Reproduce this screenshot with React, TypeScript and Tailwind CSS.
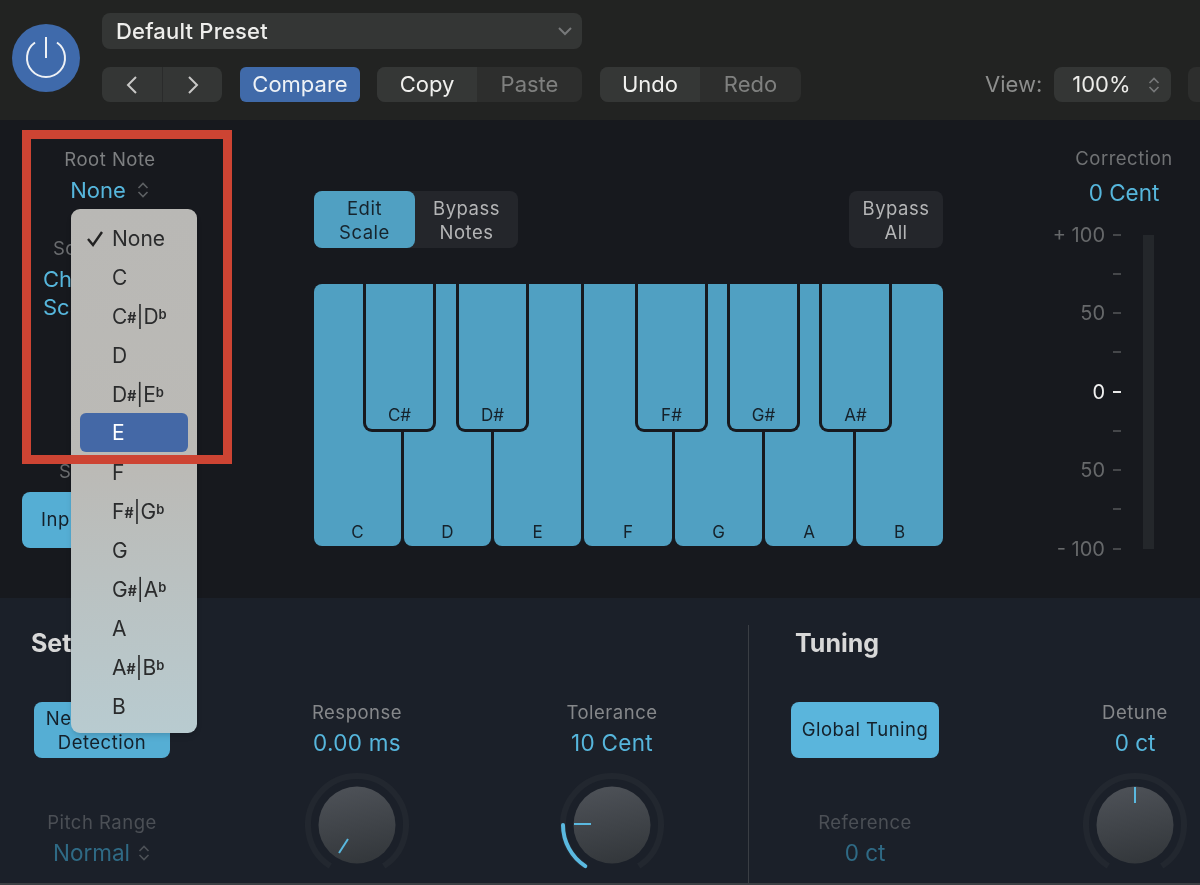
import React from 'react'

const font = { fontFamily: 'Inter, "Liberation Sans", sans-serif' }

function UpDown({ className = 'text-[#6d6f71]' }: { className?: string }) {
  return (
    <svg width="14" height="20" viewBox="0 0 14 20" fill="none" stroke="currentColor" strokeWidth="1.6" className={`shrink-0 ${className}`}>
      <path d="M2.5 8 L7 3.5 L11.5 8" />
      <path d="M2.5 12 L7 16.5 L11.5 12" />
    </svg>
  )
}

function Seg({ children, active, w }: { children: React.ReactNode; active?: boolean; w: string }) {
  return (
    <div className={`${w} h-full flex items-center justify-center ${active ? 'bg-[#353736] text-[#f0f0ee]' : 'text-[#7f807f]'}`}>
      {children}
    </div>
  )
}

function polar(r: number, deg: number) {
  const a = ((deg - 90) * Math.PI) / 180
  return [60 + r * Math.cos(a), 60 + r * Math.sin(a)]
}

function arc(r: number, from: number, to: number) {
  const [x1, y1] = polar(r, from)
  const [x2, y2] = polar(r, to)
  return `M${x1} ${y1} A${r} ${r} 0 ${to - from > 180 ? 1 : 0} 1 ${x2} ${y2}`
}

function Knob({ id, mark, value }: { id: string; mark: [number, number, number, number]; value?: [number, number] }) {
  return (
    <svg width="120" height="120" viewBox="0 0 120 120" fill="none">
      <defs>
        <linearGradient id={id} x1="0.4" y1="0" x2="0.6" y2="1">
          <stop offset="0" stopColor="#4d5157" />
          <stop offset="1" stopColor="#33373b" />
        </linearGradient>
      </defs>
      <path d={arc(49, -147, 147)} stroke="#22272f" strokeWidth="6" />
      {value && <path d={arc(49, value[0], value[1])} stroke="#5ab9e0" strokeWidth="4" strokeLinecap="round" />}
      <circle cx="60" cy="60" r="38.5" fill={`url(#${id})`} />
      <line x1={mark[0]} y1={mark[1]} x2={mark[2]} y2={mark[3]} stroke="#5ab9e0" strokeWidth="2" />
    </svg>
  )
}

function Sharp() {
  return <span className="text-[14px] font-bold relative -top-[1px]">#</span>
}

function Flat() {
  return <span className="text-[13px] font-semibold relative -top-[5px]">b</span>
}

const notes: React.ReactNode[] = [
  'None',
  'C',
  <>C<Sharp />|D<Flat /></>,
  'D',
  <>D<Sharp />|E<Flat /></>,
  'E',
  'F',
  <>F<Sharp />|G<Flat /></>,
  'G',
  <>G<Sharp />|A<Flat /></>,
  'A',
  <>A<Sharp />|B<Flat /></>,
  'B',
]

const whiteKeys = [
  { n: 'C', w: 'w-[87px]', r: 'rounded-tl-lg' },
  { n: 'D', w: 'w-[87px]', r: '' },
  { n: 'E', w: 'w-[87px]', r: '' },
  { n: 'F', w: 'w-[88px]', r: '' },
  { n: 'G', w: 'w-[87px]', r: '' },
  { n: 'A', w: 'w-[88px]', r: '' },
  { n: 'B', w: 'w-[87px]', r: 'rounded-tr-lg' },
]

const blackKeys = [
  { n: 'C#', left: 'left-[49px]' },
  { n: 'D#', left: 'left-[142px]' },
  { n: 'F#', left: 'left-[321px]' },
  { n: 'G#', left: 'left-[413px]' },
  { n: 'A#', left: 'left-[505px]' },
]

const scale = [
  { t: '+ 100' },
  { t: '' },
  { t: '50' },
  { t: '' },
  { t: '0', on: true },
  { t: '' },
  { t: '50' },
  { t: '' },
  { t: '- 100' },
]

export default function App() {
  return (
    <div className="relative w-[1200px] h-[885px] overflow-hidden bg-[#17191e] blur-[0.4px]" style={font}>
      {/* Header */}
      <div className="h-[120px] bg-[#222322] flex text-[22px]">
        <div className="w-[68px] h-[68px] ml-3 mt-6 rounded-full bg-[#3f6aab] shrink-0">
          <svg width="68" height="68" viewBox="0 0 68 68" fill="none" stroke="#eef1f5" strokeWidth="2">
            <path d="M23 18.5 A19 19 0 1 0 45 18.5" />
            <line x1="34" y1="13" x2="34" y2="34" />
          </svg>
        </div>
        <div className="ml-[22px] pt-[13px] w-[1098px] shrink-0">
          <div className="w-[480px] h-9 rounded-lg bg-[#343635] flex items-center justify-between pl-[14px] pr-[9px] text-[#eeeeec] font-medium">
            <span className="tracking-[0.2px]">Default Preset</span>
            <svg width="16" height="10" viewBox="0 0 16 10" fill="none" stroke="#77797a" strokeWidth="2">
              <path d="M2 2 L8 8 L14 2" />
            </svg>
          </div>
          <div className="mt-[18px] h-[35px] flex items-center">
            <div className="w-[120px] h-full rounded-lg bg-[#343635] flex overflow-hidden shrink-0">
              <div className="w-[61px] flex items-center justify-center border-r border-[#2a2b2b]">
                <svg width="14" height="22" viewBox="0 0 14 22" fill="none" stroke="#c9c9c7" strokeWidth="2">
                  <path d="M11 3 L3 11 L11 19" />
                </svg>
              </div>
              <div className="w-[59px] flex items-center justify-center">
                <svg width="14" height="22" viewBox="0 0 14 22" fill="none" stroke="#c9c9c7" strokeWidth="2">
                  <path d="M3 3 L11 11 L3 19" />
                </svg>
              </div>
            </div>
            <div className="ml-[18px] w-[120px] h-full rounded-md bg-[#406aa9] text-[#eef2f6] flex items-center justify-center shrink-0">
              Compare
            </div>
            <div className="ml-[17px] h-full rounded-lg bg-[#2d2e2d] flex overflow-hidden shrink-0">
              <Seg active w="w-[100px]">Copy</Seg>
              <Seg w="w-[105px]">Paste</Seg>
            </div>
            <div className="ml-[18px] h-full rounded-lg bg-[#2d2e2d] flex overflow-hidden shrink-0">
              <Seg active w="w-[100px]">Undo</Seg>
              <Seg w="w-[101px]">Redo</Seg>
            </div>
            <span className="ml-[184px] text-[#8d8e8d] shrink-0">View:</span>
            <div className="ml-[12px] w-[117px] h-full rounded-lg bg-[#343635] flex items-center pl-[18px] text-[#ecece9] shrink-0">
              100%
              <UpDown className="ml-[16px] text-[#77797a]" />
            </div>
            <div className="ml-[17px] w-[30px] h-full rounded-lg bg-[#2d2e2d] shrink-0" />
          </div>
        </div>
      </div>

      {/* Main */}
      <div className="h-[478px] flex">
        <div className="w-[314px] shrink-0 text-[22px] text-[#56b6dc]">
          <div className="w-[220px] mt-[29px] text-center text-[18.5px] tracking-[0.5px] leading-5 text-[#7d7f81]">Root Note</div>
          <div className="w-[220px] mt-[9px] flex items-center justify-center gap-[10px] leading-6">
            <span>None</span>
            <UpDown className="text-[#5d6063]" />
          </div>
          <div className="pl-[53px] mt-[36px] text-[18.5px] tracking-[0.5px] leading-5 text-[#6a6c6f]">Scale</div>
          <div className="pl-[43px] mt-[7px] leading-[28px]">
            Chromatic
            <br />
            Scale
          </div>
          <div className="pl-[59px] mt-[140px] text-[18.5px] tracking-[0.5px] leading-5 text-[#6a6c6f]">Show</div>
          <div className="ml-[22px] mt-[11px] w-[148px] h-14 rounded-lg bg-[#55aed4] text-[#14202a] text-[18.5px] tracking-[0.5px] flex items-center pl-[19px]">
            Input
          </div>
        </div>

        <div className="w-[629px] shrink-0 pt-[71px]">
          <div className="h-[57px] flex justify-between text-[18.5px] tracking-[0.5px] leading-[24px] text-center">
            <div className="flex rounded-lg bg-[#24262b] text-[#b4b5b6]">
              <div className="w-[101px] rounded-lg bg-[#50a0c2] text-[#16242d] flex items-center justify-center">
                Edit
                <br />
                Scale
              </div>
              <div className="w-[103px] flex items-center justify-center">
                Bypass
                <br />
                Notes
              </div>
            </div>
            <div className="w-[94px] rounded-lg bg-[#24262b] text-[#b4b5b6] flex items-center justify-center">
              Bypass
              <br />
              All
            </div>
          </div>
          <div className="relative mt-9 h-[262px] flex gap-[3px] text-[17px] text-[#16222b]">
            {whiteKeys.map((k) => (
              <div key={k.n} className={`${k.w} ${k.r} rounded-b-lg bg-[#50a0c2] flex items-end justify-center pb-[1px]`}>
                {k.n}
              </div>
            ))}
            {blackKeys.map((k) => (
              <div
                key={k.n}
                className={`absolute top-0 ${k.left} w-[73px] h-[148px] bg-[#50a0c2] border-x-[3.5px] border-b-[3.5px] border-[#17191e] rounded-b-[9px] flex items-end justify-center pb-[1px]`}
              >
                {k.n}
              </div>
            ))}
          </div>
        </div>

        <div className="flex-1 min-w-0">
          <div className="ml-[132px] w-[98px] mt-[28px] flex justify-center text-[18.5px] tracking-[0.5px] leading-5 text-[#707274] whitespace-nowrap">Correction</div>
          <div className="ml-[132px] w-[98px] mt-[13px] flex justify-center text-[22.5px] leading-6 text-[#56b6dc] whitespace-nowrap">0 Cent</div>
          <div className="ml-[102px] mt-[10px] flex">
            <div className="w-[76px] text-[20px]">
              {scale.map((s, i) => (
                <div key={i} className="h-[39.25px] flex items-center justify-end whitespace-nowrap">
                  <span className={s.on ? 'text-[#f0f0f0]' : 'text-[#66686a]'}>{s.t}</span>
                  <span className={`ml-[8px] w-2 h-[2px] ${s.on ? 'bg-[#e8e8e8]' : 'bg-[#45474a]'}`} />
                </div>
              ))}
            </div>
            <div className="ml-[22px] mt-[20px] w-[11px] h-[314px] bg-[#24272b]" />
          </div>
        </div>
      </div>

      {/* Bottom */}
      <div className="h-[287px] bg-[#1b2029] border-b-2 border-[#3c4044] flex">
        <div className="w-[714px] shrink-0 flex text-center">
          <div className="w-[204px] shrink-0">
            <div className="pl-[31px] mt-[31px] text-left text-[25px] leading-7 font-bold text-[#d8d8d8]">Settings</div>
            <div className="ml-[34px] mt-[45px] w-[136px] h-14 rounded-lg bg-[#55aed4] text-[#14202a] text-[18.5px] tracking-[0.5px] leading-[24px] flex items-center justify-center">
              Neural Pitch Detection
            </div>
            <div className="mt-[54px] text-[18.5px] tracking-[0.5px] leading-5 text-[#4b4f55] whitespace-nowrap">Pitch Range</div>
            <div className="mt-[9px] flex items-center justify-center gap-[7px] text-[22.5px] leading-6 text-[#2f6a85]">
              Normal
              <UpDown className="text-[#4d5157]" />
            </div>
          </div>
          <div className="w-[306px] shrink-0 pt-[104px] flex flex-col items-center">
            <div className="text-[18.5px] tracking-[0.5px] leading-5 text-[#85878a]">Response</div>
            <div className="mt-[9px] text-[22.5px] tracking-[0.3px] leading-6 text-[#56b6dc]">0.00 ms</div>
            <div className="mt-[10px]">
              <Knob id="k1" mark={[42, 88, 51, 74]} />
            </div>
          </div>
          <div className="w-[204px] shrink-0 pt-[104px] flex flex-col items-center">
            <div className="text-[18.5px] tracking-[0.5px] leading-5 text-[#85878a]">Tolerance</div>
            <div className="mt-[9px] text-[22.5px] tracking-[0.3px] leading-6 text-[#56b6dc]">10 Cent</div>
            <div className="mt-[10px]">
              <Knob id="k2" mark={[22, 59, 39, 59]} value={[-147, -90]} />
            </div>
          </div>
        </div>
        <div className="ml-[34px] mt-[27px] w-px bg-[#3a3e44] shrink-0" />
        <div className="flex text-center">
          <div className="w-[232px] shrink-0">
            <div className="ml-[46px] mt-[31px] text-left text-[25px] leading-7 font-bold text-[#d8d8d8]">Tuning</div>
            <div className="ml-[42px] mt-[45px] w-[148px] h-14 rounded-lg bg-[#5ab5dc] text-[#14202a] text-[18.5px] tracking-[0.5px] flex items-center justify-center whitespace-nowrap">
              Global Tuning
            </div>
            <div className="ml-[42px] w-[148px] mt-[54px] text-[18.5px] tracking-[0.5px] leading-5 text-[#4b4f55]">Reference</div>
            <div className="ml-[42px] w-[148px] mt-[9px] text-[22.5px] leading-6 text-[#2f6a85]">0 ct</div>
          </div>
          <div className="w-[308px] shrink-0 pt-[104px] flex flex-col items-center">
            <div className="text-[18.5px] tracking-[0.5px] leading-5 text-[#85878a]">Detune</div>
            <div className="mt-[9px] text-[22.5px] leading-6 text-[#56b6dc]">0 ct</div>
            <div className="mt-[10px]">
              <Knob id="k3" mark={[60, 22, 60, 38]} />
            </div>
          </div>
        </div>
      </div>

      {/* Popup menu */}
      <div className="absolute left-[71px] top-[209px] w-[126px] h-[524px] rounded-[9px] bg-gradient-to-b from-[#b9b8b5] via-[#bbbab6] to-[#b8cbd0] pt-[10px] text-[21px] text-[#2a2b2c] shadow-md">
        {notes.map((n, i) => (
          <div
            key={i}
            className={`relative mx-[9px] h-[39px] rounded-md flex items-center pl-[32px] ${i === 5 ? '-top-px bg-[#4468a6] text-white' : ''}`}
          >
            {i === 0 && (
              <svg width="18" height="18" viewBox="0 0 18 18" fill="none" stroke="#222" strokeWidth="2.4" className="absolute left-[6px] top-[11px]">
                <path d="M2 9 L7 15 L16 2" />
              </svg>
            )}
            <span>{n}</span>
          </div>
        ))}
      </div>

      {/* Red annotation */}
      <div className="absolute left-[22px] top-[130px] w-[210px] h-[334px] border-[9px] border-[#cd4433] pointer-events-none" />
    </div>
  )
}
